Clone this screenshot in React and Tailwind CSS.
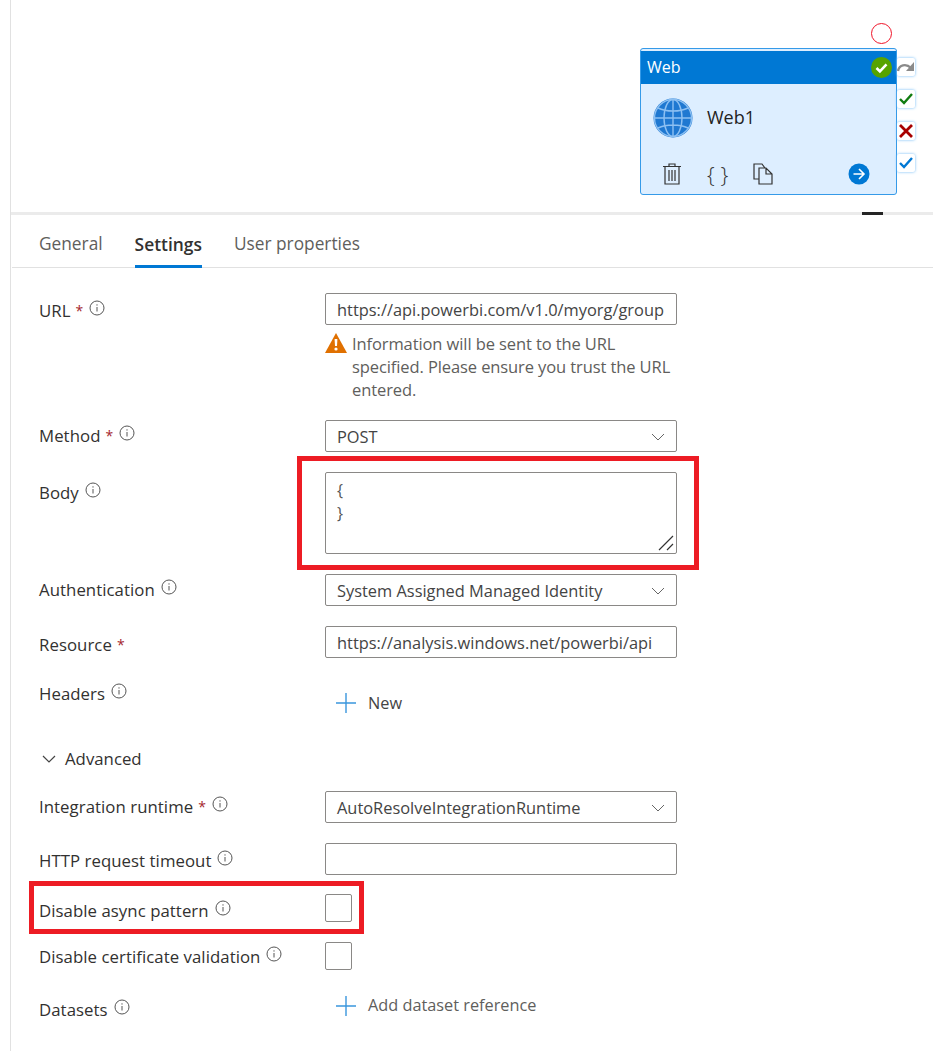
import React from 'react';

const font = "font-['Open_Sans','Noto_Sans',sans-serif]";

const Info = () => (
    <svg width="16" height="16" viewBox="0 0 16 16" fill="none" className="shrink-0">
        <circle cx="8" cy="8" r="7" stroke="#555" strokeWidth="1" />
        <path d="M8 7v4.5" stroke="#555" strokeWidth="1" />
        <circle cx="8" cy="4.9" r="0.7" fill="#555" />
    </svg>
);

const Chevron = () => (
    <svg width="14" height="8" viewBox="0 0 14 8" fill="none" className="shrink-0">
        <path d="M1 1l6 6 6-6" stroke="#666" strokeWidth="1" />
    </svg>
);

const Plus = () => (
    <svg width="20" height="20" viewBox="0 0 20 20" fill="none">
        <path d="M10 0v20M0 10h20" stroke="#3a96dd" strokeWidth="1.4" />
    </svg>
);

const Label = ({ text, required, offset = 'mt-[5px]', noInfo }) => (
    <div className={`w-[286px] h-[22px] shrink-0 self-start flex items-center text-[16.8px] leading-[22px] text-[#323130] ${offset}`}>
        <span className="font-medium tracking-[0.05px] whitespace-nowrap">{text}</span>
        {required && <span className="text-[#a4262c] ml-[5px] text-[14px]">*</span>}
        {!noInfo && <span className="ml-[6px] -mt-[7px] flex"><Info /></span>}
    </div>
);

const Box = ({ children, chevron }) => (
    <div className="w-[352px] h-[32px] border border-[#8a8886] rounded-[2px] flex items-center justify-between pl-[11px] pr-[11px] pt-[2px] text-[16.4px] text-[#444] overflow-hidden whitespace-nowrap">
        <span className="min-w-0">{children}</span>
        {chevron && <Chevron />}
    </div>
);

const SideButton = ({ children }) => (
    <div className="w-[18px] h-[18px] bg-white rounded-[2px] shadow-[0_0_3px_#6cb8f6] flex items-center justify-center">
        {children}
    </div>
);

const Node = () => (
    <div className="absolute left-[640px] top-[48px] w-[257px] h-[147px] bg-[#ddeeff] border-[1.5px] border-[#359ae8] rounded-[3px]">
        <div className="mt-[1.5px] h-[33px] bg-[#0078d4] flex items-center justify-between pl-[6px] pr-[4px] text-white text-[16px] font-medium">
            <span>Web</span>
            <svg width="21" height="21" viewBox="0 0 21 21">
                <circle cx="10.5" cy="10.5" r="10.5" fill="#57a300" />
                <path d="M5.5 11l3.4 3.4 6.6-7" stroke="#fff" strokeWidth="2.6" fill="none" />
            </svg>
        </div>
        <div className="flex items-center pl-[12px] pt-[14px]">
            <svg width="40" height="40" viewBox="0 0 40 40" fill="none">
                <circle cx="20" cy="20" r="19.5" fill="#1f78d1" />
                <g stroke="#8dc0f2" strokeWidth="1.4">
                    <circle cx="20" cy="20" r="18.5" />
                    <ellipse cx="20" cy="20" rx="9" ry="18.5" />
                    <path d="M20 1.5v37M1.5 20h37M5 10c8 4 22 4 30 0M5 30c8-4 22-4 30 0" />
                </g>
            </svg>
            <span className="ml-[14px] text-[18px] text-[#222]">Web1</span>
        </div>
        <div className="flex items-center pl-[21px] pt-[25px]">
            <svg width="20" height="22" viewBox="0 0 20 22" fill="none" stroke="#333" strokeWidth="1.2">
                <path d="M1 3.5h18M7 3.5V1h6v2.5M3 3.5V21h14V3.5M7 7v11M10 7v11M13 7v11" />
            </svg>
            <span className="ml-[25px] w-[20px] text-[22px] leading-[22px] font-light text-[#333] whitespace-nowrap">{'{ }'}</span>
            <svg className="ml-[26px]" width="20" height="22" viewBox="0 0 20 22" fill="none" stroke="#333" strokeWidth="1.2">
                <path d="M6 16H1V1h8l3 4M6 5h7l6 6v10H6zM13 5v6h6" />
            </svg>
            <svg className="ml-[75px]" width="22" height="22" viewBox="0 0 22 22" fill="none">
                <circle cx="11" cy="11" r="10.5" fill="#0078d4" />
                <path d="M5.5 11h10M11 6l5 5-5 5" stroke="#fff" strokeWidth="1.6" />
            </svg>
        </div>
        <div className="absolute left-[256px] top-[9px] flex flex-col gap-[14px]">
            <SideButton>
                <svg width="18" height="14" viewBox="0 0 18 14" fill="none">
                    <path d="M1 11c1-6 8-8 13-3" stroke="#8a8a8a" strokeWidth="2.4" />
                    <path d="M17 2v9H9z" fill="#8a8a8a" />
                </svg>
            </SideButton>
            <SideButton>
                <svg width="14" height="12" viewBox="0 0 14 12" fill="none"><path d="M1 6l4 4 8-9" stroke="#107c10" strokeWidth="2.4" /></svg>
            </SideButton>
            <SideButton>
                <svg width="14" height="14" viewBox="0 0 14 14" fill="none"><path d="M1 1l12 12M13 1L1 13" stroke="#a80000" strokeWidth="2.8" /></svg>
            </SideButton>
            <SideButton>
                <svg width="14" height="12" viewBox="0 0 14 12" fill="none"><path d="M1 6l4 4 8-9" stroke="#0078d4" strokeWidth="2.4" /></svg>
            </SideButton>
        </div>
    </div>
);

export default function App() {
    return (
        <div className={`relative w-[933px] h-[1051px] bg-white overflow-hidden ${font}`}>
            <div className="absolute left-[10px] top-0 bottom-0 w-px bg-[#e1e1e1]" />

            {/* canvas */}
            <div className="relative h-[212px]">
                <div className="absolute left-[871px] top-[23px] w-[21px] h-[21px] rounded-full border-[1.5px] border-[#f01428]" />
                <Node />
            </div>
            <div className="relative ml-[11px] h-[3px] bg-[#ebebeb]">
                <div className="absolute left-[851px] top-0 w-[21px] h-[3px] bg-[#252525]" />
            </div>

            {/* tabs */}
            <div className="ml-[12px] pl-[27px] h-[53px] border-b border-[#e1e1e1] flex gap-[32px] text-[17.3px] text-[#605e5c]">
                <div className="pt-[16px]">General</div>
                <div className="pt-[16px] text-[17.4px] font-semibold text-[#323130] border-b-[3px] border-[#0078d4] h-[53px]">Settings</div>
                <div className="pt-[16px]">User properties</div>
            </div>

            {/* form */}
            <div className="pl-[39px] pt-[25px]">
                <div className="flex">
                    <Label text="URL" required offset="mt-[7px]" />
                    <div>
                        <Box>https://api.powerbi.com/v1.0/myorg/group</Box>
                        <div className="flex w-[352px] mt-[7px] text-[16.5px] leading-[23px] text-[#605e5c]">
                            <svg className="mt-[1px] shrink-0" width="22" height="20" viewBox="0 0 22 20">
                                <path d="M11 0l11 20H0z" fill="#e07000" />
                                <path d="M9.6 6h2.8l-.4 7h-2z" fill="#fff" />
                                <circle cx="11" cy="16" r="1.6" fill="#fff" />
                            </svg>
                            <div className="ml-[5px] w-[325px] tracking-[-0.1px]">Information will be sent to the URL specified. Please ensure you trust the URL entered.</div>
                        </div>
                    </div>
                </div>

                <div className="flex mt-[19px]">
                    <Label text="Method" required offset="mt-[5px]" />
                    <Box chevron>POST</Box>
                </div>

                <div className="flex mt-[20px]">
                    <Label text="Body" offset="mt-[10px]" />
                    <div className="relative w-[352px] h-[82px] border border-[#8a8886] rounded-[2px] pl-[11px] pt-[6px] text-[16px] leading-[23px] text-[#555]">
                        <div>{'{'}</div>
                        <div>{'}'}</div>
                        <svg className="absolute right-[2px] bottom-[2px]" width="16" height="16" viewBox="0 0 16 16" fill="none">
                            <path d="M1 15L15 1M9 15l6-6" stroke="#333" strokeWidth="1.2" />
                        </svg>
                    </div>
                </div>

                <div className="flex mt-[20px]">
                    <Label text="Authentication" offset="mt-[5px]" />
                    <Box chevron>System Assigned Managed Identity</Box>
                </div>

                <div className="flex mt-[20px]">
                    <Label text="Resource" required offset="mt-[8px]" noInfo />
                    <Box>https://analysis.windows.net/powerbi/api</Box>
                </div>

                <div className="flex mt-[20px] h-[44px]">
                    <Label text="Headers" offset="mt-[5px]" />
                    <div className="flex items-center pl-[11px] pt-[6px] text-[16.3px] text-[#444]">
                        <Plus />
                        <span className="ml-[12px]">New</span>
                    </div>
                </div>

                <div className="flex items-center h-[22px] mt-[26px] text-[16.8px] font-medium text-[#323130]">
                    <span className="ml-[3px] flex"><svg width="14" height="8" viewBox="0 0 14 8" fill="none"><path d="M1 1l6 6 6-6" stroke="#444" strokeWidth="1.2" /></svg></span>
                    <span className="ml-[9px]">Advanced</span>
                </div>

                <div className="flex mt-[21px]">
                    <Label text="Integration runtime" required offset="mt-[5px]" />
                    <Box chevron>AutoResolveIntegrationRuntime</Box>
                </div>

                <div className="flex mt-[20px]">
                    <Label text="HTTP request timeout" offset="mt-[7px]" />
                    <Box />
                </div>

                <div className="flex mt-[19px] h-[28px]">
                    <Label text="Disable async pattern" offset="mt-[6px]" />
                    <div className="w-[27px] h-[28px] border border-[#8a8886] rounded-[2px]" />
                </div>

                <div className="flex mt-[20px] h-[28px]">
                    <Label text="Disable certificate validation" offset="mt-[4px]" />
                    <div className="w-[27px] h-[28px] border border-[#8a8886] rounded-[2px]" />
                </div>

                <div className="flex mt-[20px]">
                    <Label text="Datasets" offset="mt-[9px]" />
                    <div className="flex items-center pl-[11px] text-[16.3px] text-[#605e5c]">
                        <Plus />
                        <span className="ml-[12px]">Add dataset reference</span>
                    </div>
                </div>
            </div>

            {/* annotation boxes drawn over the form */}
            <div className="absolute left-[297px] top-[456px] w-[402px] h-[114px] border-[5px] border-[#ed1c24]" />
            <div className="absolute left-[29px] top-[881px] w-[335px] h-[53px] border-[5px] border-[#ed1c24]" />
        </div>
    );
}
